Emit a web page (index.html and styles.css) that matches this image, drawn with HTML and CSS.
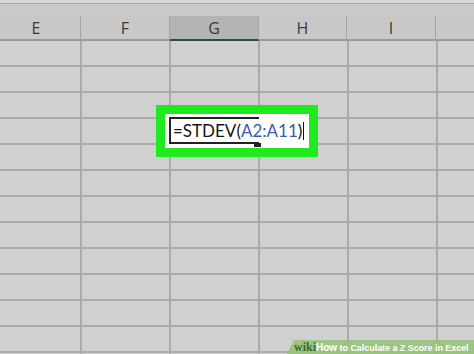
FILE: index.html
```html
<!DOCTYPE html>
<html lang="en">
<head>
    <meta charset="UTF-8">
    <meta name="viewport" content="width=device-width, initial-scale=1.0">
    <title>How to Calculate a Z Score in Excel</title>
    <link rel="stylesheet" href="styles.css">
</head>
<body>
    <div class="sheet">
        <div class="topbar"></div>
        <div class="colheads">
            <div class="colhead">E</div>
            <div class="colhead">F</div>
            <div class="colhead selected">G</div>
            <div class="colhead narrow">H</div>
            <div class="colhead">I</div>
            <div class="colhead last"></div>
        </div>
        <div class="cells"></div>
    </div>

    <!-- highlight around the active cell G4 -->
    <div class="callout">
        <div class="active-cell">
            <span class="formula">=STDEV(<span class="ref">A2:A11</span>)</span>
            <span class="caret"></span>
        </div>
        <span class="fill-handle"></span>
    </div>

    <div class="watermark"><span class="wiki">wiki</span><b>How</b> to Calculate a Z Score in Excel</div>
</body>
</html>
```

FILE: styles.css
```css
body {
    margin: 0;
    width: 474px;
    height: 354px;
    overflow: hidden;
    position: relative;
    background-color: #d0d0d0;
    font-family: "Open Sans", "Noto Sans", sans-serif;
}

.sheet {
    margin-left: -8px;
}

.topbar {
    height: 16px;
    box-sizing: border-box;
    border-top: 3px solid #d6d6d6;
    background: linear-gradient(#a8a8a8 0 1px, #c9c9c9 1px);
}

.colheads {
    display: flex;
    height: 25px;
    background: #c8c8c8;
}

.colhead {
    flex: none;
    width: 89px;
    box-sizing: border-box;
    border-right: 1px solid #a4a4a4;
    border-bottom: 2px solid #9a9a9a;
    display: flex;
    align-items: center;
    justify-content: center;
    padding-top: 1px;
    font-size: 16px;
    color: #3a3a3a;
}

.colhead.narrow {
    width: 88px;
}

.colhead.selected {
    background: #b4b4b4;
    border-bottom-color: #2f4d3b;
}

.colhead.last {
    flex: 1;
    border-right: none;
}

.cells {
    height: 313px;
    background-color: #d0d0d0;
    background-image:
        repeating-linear-gradient(to right, transparent 0 87px, #ababab 87px 89px),
        repeating-linear-gradient(to bottom, transparent 0 24px, #ababab 24px 26px);
    background-position: 1px 0, 0 0;
}

.callout {
    position: absolute;
    left: 156px;
    top: 105px;
    width: 162px;
    height: 52px;
    box-sizing: border-box;
    border: 9px solid #1fe91f;
    background: #fff;
}

.active-cell {
    margin: 3px 0 0 4px;
    width: 90px;
    height: 27px;
    box-sizing: border-box;
    border: 2px solid #222;
    border-right: none;
    display: flex;
    align-items: center;
    white-space: nowrap;
    padding-left: 2px;
    font-family: "Lato", sans-serif;
    font-size: 17px;
    color: #151515;
}

.ref {
    color: #3a5bb3;
}

.caret {
    flex: none;
    width: 1px;
    height: 18px;
    margin-left: 1px;
    background: #111;
}

.fill-handle {
    position: absolute;
    left: 89px;
    top: 29px;
    width: 7px;
    height: 4px;
    background: #222;
}

.watermark {
    position: absolute;
    right: 0;
    bottom: 0;
    width: 187px;
    height: 14px;
    box-sizing: border-box;
    padding-left: 7px;
    background: rgba(150, 194, 122, 0.9);
    clip-path: polygon(7px 0, 100% 0, 100% 100%, 0 100%);
    font-family: "Liberation Sans", Arial, sans-serif;
    font-size: 9px;
    font-weight: bold;
    letter-spacing: -0.05px;
    line-height: 15px;
    color: #fff;
    white-space: nowrap;
}

.watermark b {
    font-size: 10px;
    letter-spacing: 0;
}

.wiki {
    font-family: "Liberation Serif", serif;
    font-size: 12px;
    letter-spacing: 0;
    color: #3e6a2c;
}
```
